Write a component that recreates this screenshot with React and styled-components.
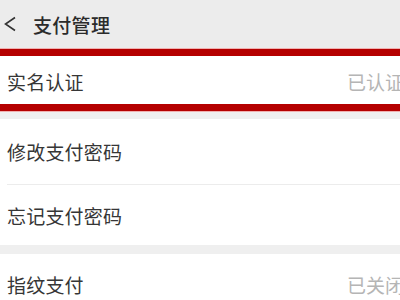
import React from "react";
import styled, { createGlobalStyle } from "styled-components";

const Global = createGlobalStyle`
  html, body { margin: 0; padding: 0; }
  body {
    background: #efefef;
    font-family: "Noto Sans CJK SC", "Noto Sans", sans-serif;
    overflow: hidden;
  }
`;

const Page = styled.div`
  width: 400px;
  height: 300px;
  overflow: hidden;
  background: #efefef;
`;

const Header = styled.div`
  height: 49px;
  display: flex;
  align-items: center;
  padding-left: 3px;
  gap: 16px;
  background: #ececec;
  box-sizing: border-box;
  padding-bottom: 1px;
`;

const Title = styled.div`
  font-size: 19px;
  font-weight: 500;
  color: #2b2b2b;
  letter-spacing: 0.3px;
`;

const Group = styled.div`
  background: #fff;
  margin-bottom: ${(p) => p.$gap || 0}px;
`;

const Row = styled.div`
  display: flex;
  align-items: center;
  justify-content: space-between;
  height: ${(p) => p.$h}px;
  padding-left: 7px;
  margin-right: -4px;
  box-sizing: border-box;
  background: #fff;
  ${(p) =>
    p.$highlight &&
    `border-top: 7px solid #b50000; border-bottom: 7px solid #b50000; box-shadow: 0 -1px 0 #f0b0b0, 0 1px 0 #f0b0b0;`}
`;

const Label = styled.span`
  font-size: 19px;
  color: #363636;
  letter-spacing: 0.2px;
  padding-top: ${(p) => p.$shift || 0}px;
`;

const Value = styled.span`
  font-size: 19px;
  color: #b5b5b5;
  white-space: nowrap;
  padding-top: ${(p) => p.$shift || 0}px;
`;

const Divider = styled.div`
  height: 1px;
  margin-left: 7px;
  background: #ececec;
`;

const Back = () => (
  <svg width="14" height="18" viewBox="0 0 14 18">
    <polyline points="12,2.5 2.5,9 12,15.5" fill="none" stroke="#333" strokeWidth="1.6" strokeLinejoin="miter" />
  </svg>
);

export default function App() {
  return (
    <Page>
      <Global />
      <Header>
        <Back />
        <Title>支付管理</Title>
      </Header>
      <Group $gap={8}>
        <Row $h={62} $highlight>
          <Label $shift={3}>实名认证</Label>
          <Value $shift={3}>已认证</Value>
        </Row>
      </Group>
      <Group $gap={9}>
        <Row $h={65}>
          <Label>修改支付密码</Label>
        </Row>
        <Divider />
        <Row $h={60}>
          <Label>忘记支付密码</Label>
        </Row>
      </Group>
      <Group>
        <Row $h={60}>
          <Label>指纹支付</Label>
          <Value>已关闭</Value>
        </Row>
      </Group>
    </Page>
  );
}
